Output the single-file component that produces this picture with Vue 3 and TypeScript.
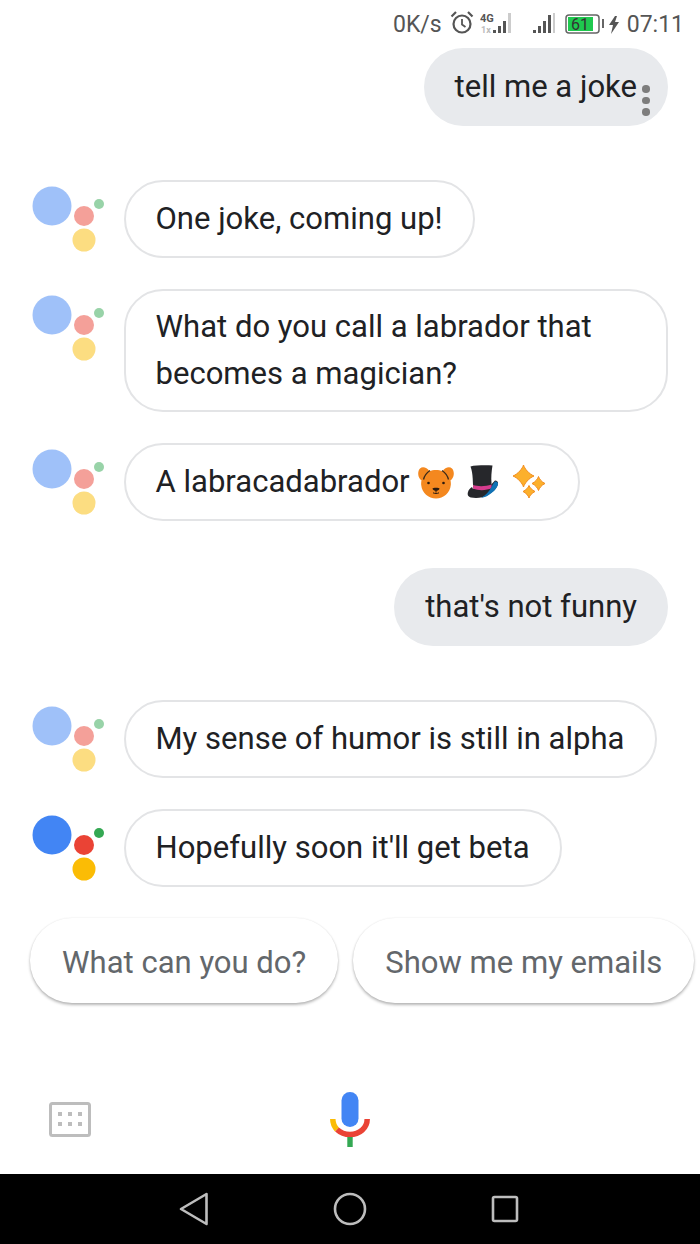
<script setup lang="ts">
interface Msg {
  text: string;
  faded: boolean;
  emoji?: boolean;
}

const firstGroup: Msg[] = [
  { text: 'One joke, coming up!', faded: true },
  { text: 'What do you call a labrador that becomes a magician?', faded: true },
  { text: 'A labracadabrador', faded: true, emoji: true },
];

const secondGroup: Msg[] = [
  { text: 'My sense of humor is still in alpha', faded: true },
  { text: "Hopefully soon it'll get beta", faded: false },
];

const chips = ['What can you do?', 'Show me my emails'];
</script>

<template>
  <div class="screen">
    <div class="status">
      <span class="speed">0K/s</span>
      <svg class="st-alarm" width="24" height="26" viewBox="0 0 24 26">
        <circle cx="12" cy="13" r="8.500" fill="none" stroke="#555" stroke-width="2.200" />
        <path d="M12 8v5.500l3.500 2.500" fill="none" stroke="#555" stroke-width="1.800" />
        <path d="M1.500 5.500 6 1M22.500 5.500 18 1" fill="none" stroke="#555" stroke-width="2.200" />
      </svg>
      <svg class="st-sig1" width="34" height="24" viewBox="0 0 34 24">
        <text x="0" y="10" class="net">4G</text>
        <text x="1" y="21" class="net net-off">1x</text>
        <rect x="13" y="18" width="3" height="3" fill="#555" />
        <rect x="18" y="14" width="3" height="7" fill="#555" />
        <rect x="23" y="9" width="3" height="12" fill="#555" />
        <rect x="28" y="1" width="3" height="20" fill="#ccc" />
      </svg>
      <svg class="st-sig2" width="22" height="24" viewBox="0 0 22 24">
        <rect x="0" y="18" width="3" height="3" fill="#555" />
        <rect x="5" y="14" width="3" height="7" fill="#555" />
        <rect x="10" y="9" width="3" height="12" fill="#555" />
        <rect x="15" y="3" width="3" height="18" fill="#555" />
        <rect x="20" y="1" width="2" height="20" fill="#ccc" />
      </svg>
      <svg class="st-batt" width="58" height="24" viewBox="0 0 58 24">
        <rect x="1" y="3" width="33" height="18" rx="3" fill="#fff" stroke="#666" stroke-width="1.500" />
        <rect x="3" y="5" width="25" height="14" fill="#1fc94f" />
        <text x="15" y="18" class="batt-num" text-anchor="middle">61</text>
        <rect x="37" y="7" width="2" height="9" fill="#666" />
        <path d="M50 4 44 13h4l-2 9 8-12h-4l2-6z" fill="#555" />
      </svg>
      <span class="clock">07:11</span>
    </div>

    <div class="user first">
      <div class="bubble-user joke">
        tell me a joke
        <span class="dots"><i></i><i></i><i></i></span>
      </div>
    </div>

    <div class="group g1">
      <div v-for="(m, i) in firstGroup" :key="i" class="row">
        <svg class="logo" :class="{ faded: m.faded }" width="72" height="78" viewBox="0 0 72 78">
          <circle cx="20" cy="26" r="19.500" fill="#4285f4" />
          <circle cx="52" cy="36" r="10" fill="#ea4335" />
          <circle cx="52" cy="60" r="11.500" fill="#fbbc05" />
          <circle cx="67" cy="24" r="5" fill="#34a853" />
        </svg>
        <div class="bubble-bot">
          {{ m.text }}
          <span v-if="m.emoji" class="emoji">
            <svg width="36" height="34" viewBox="0 0 36 34">
              <path d="M18 5c-2.500 0-4.500.3-6.500 1.200C9 2.500 4.500 1 2 3.500-.5 6.200-.3 11 2 14c.4.500.9.900 1.500 1.200C3.200 17 3 18.500 3.200 20c.8 8 7.200 13.500 14.800 13.500S32 28 32.800 20c.2-1.500 0-3-.3-4.800.6-.3 1.100-.7 1.500-1.200 2.300-3 2.500-7.800 0-10.500C31.500 1 27 2.500 24.500 6.200 22.500 5.300 20.500 5 18 5z" fill="#f4881f" />
              <path d="M12 5.500C9 7.500 6.500 10.500 5.500 14.500M24 5.500c3 2 5.500 5 6.500 9" fill="none" stroke="#3a2a1a" stroke-width="1.300" />
              <circle cx="10.500" cy="18" r="1.300" fill="#2b1b10" />
              <circle cx="25.500" cy="18" r="1.300" fill="#2b1b10" />
              <path d="M14.500 23.500c0-1 7-1 7 0 0 1.300-2.300 2.500-3.500 2.500s-3.500-1.200-3.500-2.500z" fill="#2b1b10" />
              <path d="M18 26v1.500m-3 .3c1.500.9 4.500.9 6 0" fill="none" stroke="#2b1b10" stroke-width="1" />
            </svg>
            <svg width="32" height="34" viewBox="0 0 32 34">
              <path d="M1 27c-1 3 .5 5 3 5.500 5 1 12 .5 17-2.500 5-3 9-7 10-11 .5-2-1-3.500-3-3.500L20 24H6l-1-2c-2 1-3.500 3-4 5z" fill="#26272b" />
              <path d="M3.500 1.500C8 .3 18 .2 25.500.5c-1 6-1.500 12-1 17.500.1 2 .2 4 0 5-3 3-14 3.500-18 1-.6-3.500-.6-7-.8-10.500C5.500 9.500 5 5.500 3.500 1.500z" fill="#26272b" />
              <path d="M6 20c5 1.700 13 1.500 18.500-.5l.2 3.800c-5 2.200-13 2.500-18.400.5z" fill="#d63c8e" />
              <path d="M24.500 22c1-2 2-4 3.500-5.500 2-.5 3.500 1 3 3-1 4-5 8-10 11-2.500 1.500-4 2-7 2.300 4-2 8-6 10.500-10.800z" fill="#0f72b5" />
            </svg>
            <svg width="34" height="35" viewBox="0 0 34 35">
              <path d="M11.500 1c1 3.500 5.500 9 10.500 11-5 2-9.500 7.500-10.500 11C10.500 19.500 6 14 1 12c5-2 9.500-7.500 10.500-11z" fill="#fcb02c" stroke="#f28c1e" stroke-width="1" />
              <path d="M26.500 12.500c.6 2 3 5.500 6.500 7-3.500 1.500-5.900 5-6.500 7-.6-2-3-5.500-6.500-7 3.500-1.500 5.900-5 6.500-7z" fill="#fcb02c" stroke="#f28c1e" stroke-width="1" />
              <path d="M17 21.500c.6 2 3 4.500 6 6-3 1.500-5.400 4-6 6.500-.6-2.500-3-5-6-6.500 3-1.500 5.400-4 6-6z" fill="#fcb02c" stroke="#f28c1e" stroke-width="1" />
            </svg>
          </span>
        </div>
      </div>
    </div>

    <div class="user second">
      <div class="bubble-user">that's not funny</div>
    </div>

    <div class="group g2">
      <div v-for="(m, i) in secondGroup" :key="i" class="row">
        <svg class="logo" :class="{ faded: m.faded }" width="72" height="78" viewBox="0 0 72 78">
          <circle cx="20" cy="26" r="19.500" fill="#4285f4" />
          <circle cx="52" cy="36" r="10" fill="#ea4335" />
          <circle cx="52" cy="60" r="11.500" fill="#fbbc05" />
          <circle cx="67" cy="24" r="5" fill="#34a853" />
        </svg>
        <div class="bubble-bot">{{ m.text }}</div>
      </div>
    </div>

    <div class="chips">
      <div v-for="c in chips" :key="c" class="chip">{{ c }}</div>
    </div>

    <div class="input">
      <svg class="kbd" width="44" height="37" viewBox="0 0 44 37">
        <rect x="2.500" y="2.500" width="39" height="32" rx="2" fill="none" stroke="#bdbdbd" stroke-width="3" />
        <g fill="#bdbdbd">
          <rect x="10" y="11" width="4" height="4" />
          <rect x="20" y="11" width="4" height="4" />
          <rect x="30" y="11" width="4" height="4" />
          <rect x="10" y="21" width="4" height="4" />
          <rect x="20" y="21" width="4" height="4" />
          <rect x="30" y="21" width="4" height="4" />
        </g>
      </svg>
      <svg class="mic" width="40" height="56" viewBox="0 0 40 56">
        <rect x="11.500" y="0" width="17" height="35" rx="8.500" fill="#4285f4" />
        <path d="M2.800 27c0 4 1.400 7.500 4.200 10.500" fill="none" stroke="#fbbc05" stroke-width="5.500" />
        <path d="M7 37.500c3.200 3 7.500 5 13 5 9.500 0 17.200-6.500 17.200-15.500" fill="none" stroke="#ea4335" stroke-width="5.500" />
        <rect x="17.300" y="45" width="5.400" height="10" fill="#34a853" />
      </svg>
    </div>

    <div class="nav">
      <svg width="30" height="34" viewBox="0 0 30 34">
        <path d="M27.500 2 2 17l25.500 15z" fill="none" stroke="#bdbdbd" stroke-width="2.600" stroke-linejoin="round" />
      </svg>
      <svg width="34" height="34" viewBox="0 0 34 34">
        <circle cx="17" cy="17" r="15" fill="none" stroke="#bdbdbd" stroke-width="2.600" />
      </svg>
      <svg width="28" height="28" viewBox="0 0 28 28">
        <rect x="2" y="2" width="24" height="24" rx="1.500" fill="none" stroke="#bdbdbd" stroke-width="2.600" />
      </svg>
    </div>
  </div>
</template>

<style>
body {
  background: #fff;
}
</style>

<style scoped>
.screen {
  width: 700px;
  height: 1244px;
  display: flex;
  flex-direction: column;
  background: #fff;
  font-family: Roboto, "Liberation Sans", sans-serif;
  color: #202124;
  overflow: hidden;
}

.status {
  height: 48px;
  display: flex;
  align-items: center;
  justify-content: flex-end;
  padding-right: 16px;
  font-size: 23px;
  color: #555;
  box-sizing: border-box;
}

.speed {
  margin-right: 8px;
}

.st-sig1 {
  margin-left: 6px;
}

.st-sig2 {
  margin-left: 19px;
}

.st-batt {
  margin-left: 10px;
}

.clock {
  margin-left: 4px;
}

.net {
  font-size: 11px;
  font-weight: 700;
  fill: #555;
}

.net-off {
  fill: #bbb;
  font-size: 9px;
}

.batt-num {
  font-size: 16px;
  fill: #333;
}

.user {
  display: flex;
  justify-content: flex-end;
  padding-right: 32px;
}

.second {
  margin-top: 47px;
}

.bubble-user {
  position: relative;
  height: 78px;
  box-sizing: border-box;
  display: flex;
  align-items: center;
  padding: 0 31px 2px;
  border-radius: 39px;
  background: #e8eaed;
  font-size: 31.050px;
}

.dots {
  position: absolute;
  right: 18.500px;
  top: 37px;
  display: flex;
  flex-direction: column;
  gap: 4px;
}

.dots i {
  width: 7.500px;
  height: 7.500px;
  border-radius: 50%;
  background: #7d7d7d;
}

.group {
  display: flex;
  flex-direction: column;
  gap: 31px;
  padding-left: 32px;
}

.g1 {
  margin-top: 54px;
}

.g2 {
  margin-top: 54px;
}

.row {
  display: flex;
  align-items: flex-start;
  gap: 20px;
}

.logo {
  flex-shrink: 0;
}

.logo.faded {
  opacity: 0.5;
}

.bubble-bot {
  min-height: 78px;
  max-width: 544px;
  box-sizing: border-box;
  display: flex;
  align-items: center;
  padding: 12px 30.500px 13px 29.500px;
  border: 2px solid #e3e4e6;
  border-radius: 39px;
  font-size: 31.050px;
  line-height: 47px;
}

.emoji {
  display: flex;
  align-items: center;
  margin: 0 1.500px 0 8px;
  gap: 13px;
}

.chips {
  display: flex;
  gap: 15px;
  margin-top: 31px;
  padding-left: 30px;
}

.chip {
  height: 85px;
  box-sizing: border-box;
  display: flex;
  align-items: center;
  padding: 3px 32px 0;
  border-radius: 42px;
  background: #fff;
  color: #63676b;
  font-size: 31.050px;
  white-space: nowrap;
  box-shadow: 0 2px 3px rgba(0, 0, 0, 0.28), 0 0 2px rgba(0, 0, 0, 0.08);
}

.input {
  flex: 1;
  position: relative;
  display: flex;
  justify-content: center;
  padding-top: 89px;
  box-sizing: border-box;
}

.kbd {
  position: absolute;
  left: 48px;
  top: 98px;
}

.mic {
  display: block;
}

.nav {
  height: 70px;
  background: #000;
  display: flex;
  align-items: center;
  justify-content: center;
  gap: 124px;
  padding-right: 2px;
  flex-shrink: 0;
}
</style>
